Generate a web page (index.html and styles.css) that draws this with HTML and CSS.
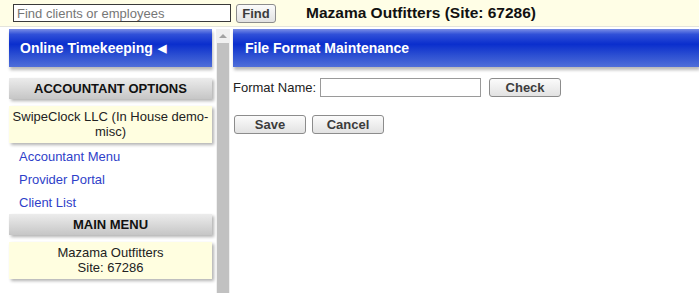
FILE: index.html
```html
<!DOCTYPE html>
<html>
<head>
<meta charset="utf-8">
<link rel="stylesheet" href="styles.css">
</head>
<body>
<div class="topbar">
  <input class="search" type="text" placeholder="Find clients or employees">
  <button class="btn find">Find</button>
  <span class="title">Mazama Outfitters (Site: 67286)</span>
</div>
<div class="layout">
  <aside class="sidebar">
    <div class="bluehead">Online Timekeeping <span class="arrow">&#9664;</span></div>
    <div class="grayhead first">ACCOUNTANT OPTIONS</div>
    <div class="note tight">SwipeClock LLC (In House demo-misc)</div>
    <nav class="links">
      <a href="#">Accountant Menu</a>
      <a href="#">Provider Portal</a>
      <a href="#">Client List</a>
    </nav>
    <div class="grayhead">MAIN MENU</div>
    <div class="note">Mazama Outfitters<br>Site: 67286</div>
  </aside>
  <div class="scrollbar">
    <div class="scroll-up"><span class="tri"></span></div>
    <div class="thumb"></div>
  </div>
  <main class="main">
    <div class="bluehead main-head">File Format Maintenance</div>
    <div class="form-row">
      <label class="label">Format Name:</label>
      <input class="field" type="text">
      <button class="btn wide check">Check</button>
    </div>
    <div class="actions">
      <button class="btn wide save">Save</button>
      <button class="btn wide cancel">Cancel</button>
    </div>
  </main>
</div>
</body>
</html>
```
FILE: styles.css
```css
html, body {
  margin: 0;
  padding: 0;
  height: 100%;
  overflow: hidden;
  background: #fff;
  font-family: "Liberation Sans", Arial, sans-serif;
  font-size: 13px;
  color: #222;
}

.topbar {
  height: 27px;
  background: #fffee6;
  border-bottom: 1px solid #e4e4dc;
  display: flex;
  align-items: center;
  box-sizing: border-box;
}

.search {
  margin-left: 13px;
  width: 218px;
  height: 18px;
  box-sizing: border-box;
  border: 1px solid #3a3a3a;
  padding: 0 3px;
  font-family: "Liberation Sans", Arial, sans-serif;
  font-size: 13px;
  background: #fff;
  outline: none;
}
.search::placeholder { color: #767676; }

.btn {
  height: 19px;
  box-sizing: border-box;
  border: 1px solid #8c8c8c;
  border-radius: 3px;
  background: linear-gradient(#fbfbfb, #e2e2e2);
  font-family: "Liberation Sans", Arial, sans-serif;
  font-size: 13px;
  font-weight: bold;
  color: #3c3c3c;
  padding: 0;
  line-height: 17px;
}
.find {
  margin-left: 5px;
  width: 40px;
}
.title {
  margin-left: 30px;
  font-size: 15.5px;
  font-weight: bold;
  color: #111;
}

.layout {
  display: flex;
  padding-top: 2px;
  height: calc(100% - 27px);
  box-sizing: border-box;
}

.sidebar {
  margin-left: 9px;
  width: 203px;
  flex: none;
}

.bluehead {
  height: 38px;
  display: flex;
  align-items: center;
  box-sizing: border-box;
  padding-left: 11px;
  color: #fff;
  font-weight: bold;
  font-size: 14px;
  background: linear-gradient(#7a8ee6 0%, #3050d8 14%, #0a2ecd 40%, #2d50d2 70%, #4f6ed9 100%);
  box-shadow: 1px 3px 3px rgba(0, 0, 0, 0.28);
}
.bluehead .arrow {
  margin-left: 5px;
  font-size: 11px;
}

.grayhead {
  height: 21px;
  display: flex;
  align-items: center;
  justify-content: center;
  font-weight: bold;
  color: #111;
  background: linear-gradient(#ececec, #c6c6c6);
  box-shadow: 2px 2px 3px rgba(0, 0, 0, 0.3);
}
.grayhead.first { margin-top: 11px; }

.note {
  margin-top: 7px;
  padding: 3px 4px 4px;
  line-height: 15px;
  text-align: center;
  background: #fffee0;
  box-shadow: 2px 2px 3px rgba(0, 0, 0, 0.3);
  color: #222;
}
.note.tight {
  padding-left: 1px;
  padding-right: 1px;
}

.links {
  margin-top: 2px;
  display: flex;
  flex-direction: column;
}
.links a {
  line-height: 23px;
  padding-left: 10px;
  color: #2f3fc9;
  text-decoration: none;
}

.scrollbar {
  margin-left: 4px;
  width: 14px;
  flex: none;
  background: #f0f0f0;
  display: flex;
  flex-direction: column;
}
.scroll-up {
  height: 14px;
  display: flex;
  align-items: center;
  justify-content: center;
}
.tri {
  width: 0;
  height: 0;
  border-left: 4px solid transparent;
  border-right: 4px solid transparent;
  border-bottom: 4px solid #a3a3a3;
}
.thumb {
  flex: 1;
  margin: 0 1px;
  background: #c1c1c1;
}

.main {
  margin-left: 3px;
  flex: 1;
}
.main-head { padding-left: 12px; }

.form-row {
  margin-top: 11px;
  display: flex;
  align-items: center;
  height: 19px;
}
.label { color: #222; }
.field {
  margin-left: 4px;
  width: 161px;
  height: 19px;
  box-sizing: border-box;
  border: 1px solid #9a9a9a;
  padding: 0 3px;
  background: #fff;
  outline: none;
}
.wide { width: 72px; }
.check { margin-left: 8px; }

.actions {
  margin-top: 18px;
  display: flex;
}
.save { margin-left: 1px; }
.cancel { margin-left: 6px; }
```
